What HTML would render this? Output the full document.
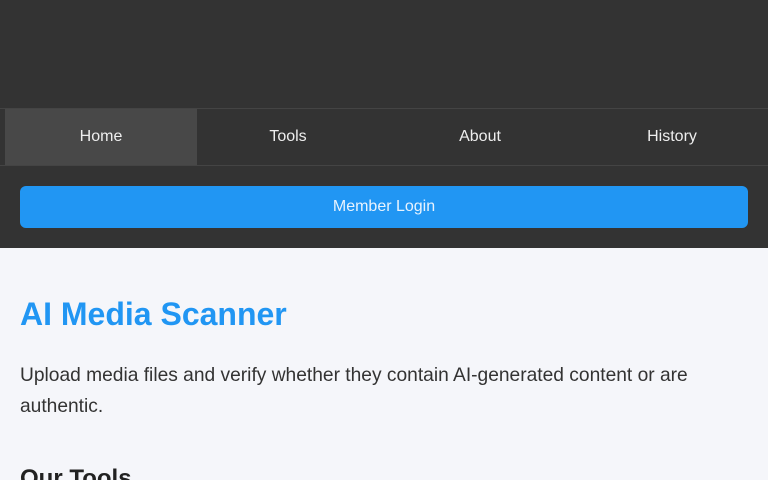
<!DOCTYPE html>
<html><head><meta charset="utf-8"><style>
*{margin:0;padding:0;box-sizing:border-box}
html,body{width:768px;height:480px;overflow:hidden}
body{background:#f5f6fa;font-family:"Liberation Sans",Arial,sans-serif;position:relative}
.hdr{background:#333;height:248px;position:relative}
.nav{position:absolute;top:108px;left:0;width:768px;height:58px;border-top:1px solid #444;border-bottom:1px solid #444}
.nav a{position:absolute;top:0;height:56px;width:192px;line-height:56px;text-align:center;color:#eee;font-size:16px;text-decoration:none}
.btn{position:absolute;left:20px;top:186px;width:728px;height:42px;background:#2196f3;border-radius:6px;color:#e8f3fe;font-size:16px;text-align:center;line-height:42px}
h1{position:absolute;left:20px;top:296px;font-size:32px;color:#2196f3;font-weight:bold}
p{position:absolute;left:20px;top:360px;width:728px;font-size:19.2px;line-height:31px;color:#333}
h2{position:absolute;left:20px;top:465px;font-size:24px;color:#222;font-weight:bold}
</style></head><body>
<div class="hdr">
<div class="nav">
<a style="left:5px;background:#484848">Home</a>
<a style="left:192px">Tools</a>
<a style="left:384px">About</a>
<a style="left:576px">History</a>
</div>
<div class="btn">Member Login</div>
</div>
<h1>AI Media Scanner</h1>
<p>Upload media files and verify whether they contain AI-generated content or are authentic.</p>
<h2>Our Tools</h2>
</body></html>
